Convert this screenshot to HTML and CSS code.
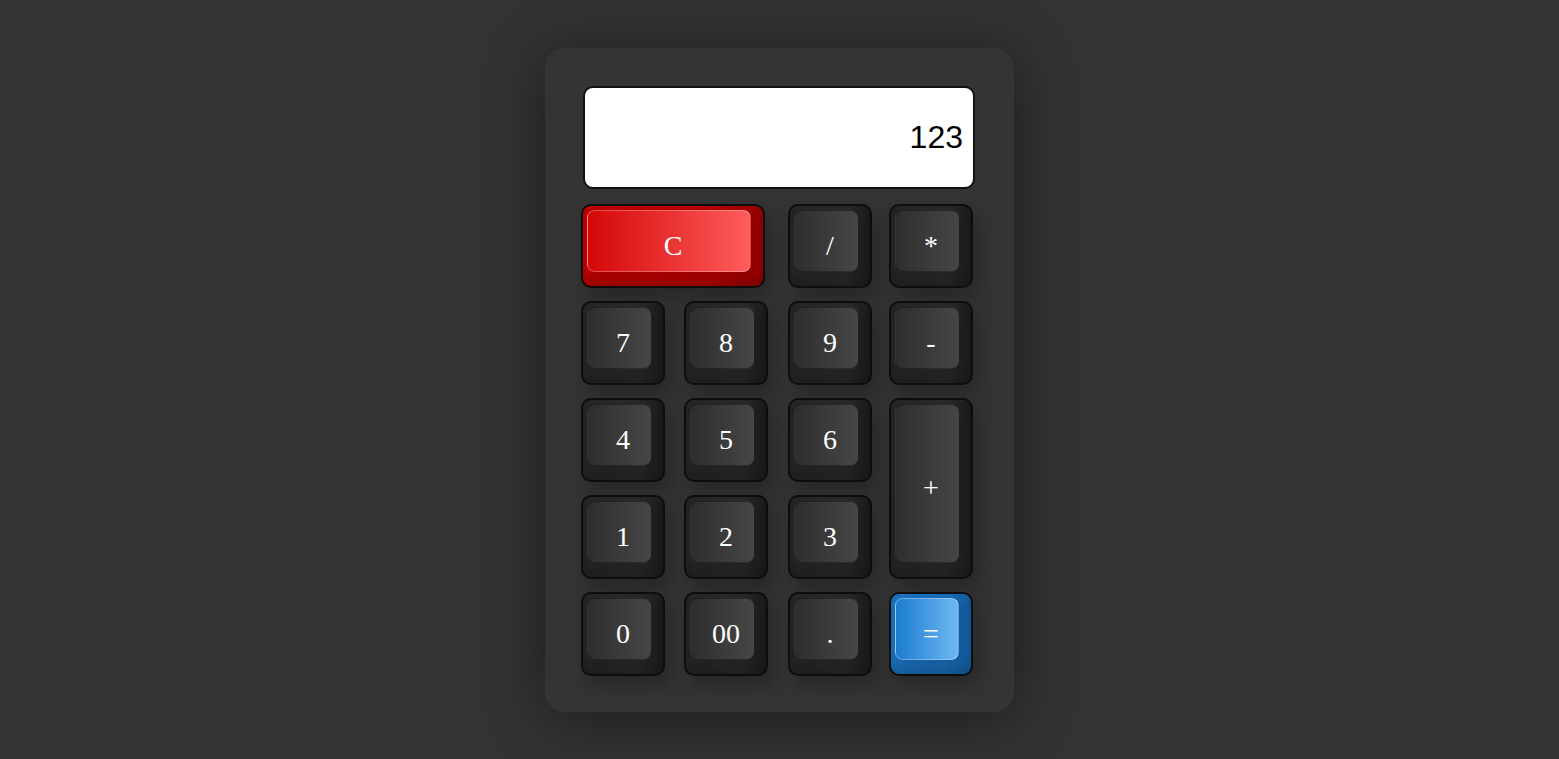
FILE: index.html
```html
<!DOCTYPE html>
<html lang="en">
<head>
<meta charset="utf-8">
<title>Calculator</title>
<link rel="stylesheet" href="styles.css">
</head>
<body>
<div class="calculator">
  <div class="display">123</div>
  <div class="keys">
    <span class="key key-clear wide">C</span>
    <span class="key">/</span>
    <span class="key">*</span>
    <span class="key">7</span>
    <span class="key">8</span>
    <span class="key">9</span>
    <span class="key">-</span>
    <span class="key">4</span>
    <span class="key">5</span>
    <span class="key">6</span>
    <span class="key tall">+</span>
    <span class="key">1</span>
    <span class="key">2</span>
    <span class="key">3</span>
    <span class="key">0</span>
    <span class="key">00</span>
    <span class="key">.</span>
    <span class="key key-equal">=</span>
  </div>
</div>
</body>
</html>
```
FILE: styles.css
```css
* { box-sizing: border-box; }

html, body {
  margin: 0;
  height: 100%;
}

body {
  background: #333333;
  display: flex;
  align-items: center;
  justify-content: center;
  font-family: "Liberation Serif", "Times New Roman", serif;
}

.calculator {
  width: 469px;
  height: 664px;
  background: #343434;
  border-radius: 20px;
  padding: 38px 36px 36px 36px;
  box-shadow: 0 6px 60px rgba(0, 0, 0, 0.45);
}

.display {
  margin-left: 2px;
  width: 392px;
  height: 103px;
  background: #fff;
  border: 2px solid #111;
  border-radius: 10px;
  display: flex;
  align-items: center;
  justify-content: flex-end;
  padding-right: 10px;
  font-family: "Liberation Sans", Arial, sans-serif;
  font-size: 32px;
  color: #000;
}

.keys {
  margin-top: 15px;
  display: grid;
  grid-template-columns: 103px 104px 101px 84px;
  grid-auto-rows: 84px;
  row-gap: 13px;
}

.key {
  position: relative;
  z-index: 0;
  width: 84px;
  display: flex;
  align-items: center;
  justify-content: center;
  border: 2px solid #0d0d0d;
  border-radius: 10px;
  background: linear-gradient(90deg, #262626 0%, #2a2a2a 70%, #1c1c1c 100%);
  box-shadow: inset 0 -8px 10px rgba(0, 0, 0, 0.2), 6px 10px 18px rgba(0, 0, 0, 0.25);
  color: #fff;
  font-size: 28px;
  line-height: 1;
}

.key::before {
  content: "";
  position: absolute;
  z-index: -1;
  top: 4px;
  left: 4px;
  right: 12px;
  bottom: 14px;
  border-radius: 8px;
  background: linear-gradient(90deg, #2e2e2e, #464646);
  border-top: 1px solid rgba(0, 0, 0, 0.35);
  border-left: 1px solid rgba(0, 0, 0, 0.25);
  border-bottom: 1px solid rgba(0, 0, 0, 0.3);
  box-shadow: 4px 4px 8px rgba(0, 0, 0, 0.15);
}

.wide { grid-column: span 2; width: 184px; }
.tall { grid-row: span 2; }

.key-clear {
  background: linear-gradient(90deg, #c40000 0%, #b80000 70%, #9a0000 100%);
}
.key-clear::before {
  background: linear-gradient(90deg, #d40808, #ff5c5c);
  border: 1px solid rgba(255, 255, 255, 0.28);
}

.key-equal {
  background: linear-gradient(90deg, #1c74c2 0%, #1a6cb6 70%, #135ea0 100%);
}
.key-equal::before {
  background: linear-gradient(90deg, #1c7dd0, #6fb8f1);
  border: 1px solid rgba(255, 255, 255, 0.3);
}
```
